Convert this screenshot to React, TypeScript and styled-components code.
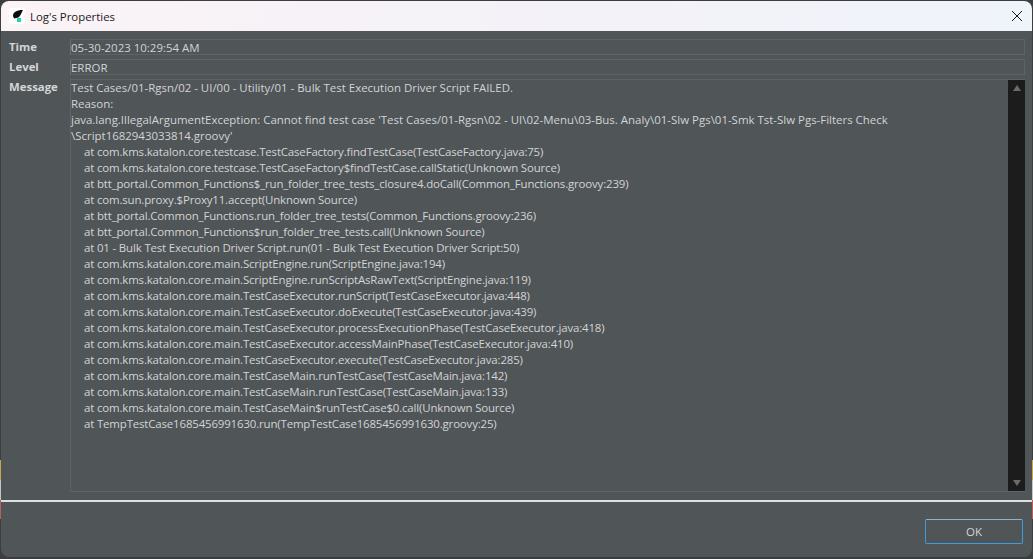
import React from 'react';
import styled, { createGlobalStyle } from 'styled-components';

const GlobalStyle = createGlobalStyle`
  html, body {
    margin: 0;
    padding: 0;
    height: 559px;
    overflow: hidden;
    background: #3b3d3e;
  }
`;

const DialogWindow = styled.div`
  width: 1033px;
  height: 559px;
  box-sizing: border-box;
  padding: 1px 1px 2px 1px;
  display: flex;
  flex-direction: column;
  font-family: 'Open Sans', 'Liberation Sans', sans-serif;
  background: linear-gradient(
    180deg,
    #3b3d3e 0,
    #3b3d3e 460px,
    #c9a94e 460px,
    #c9a94e 480px,
    #c4c6c6 480px,
    #c4c6c6 500px,
    #b8605c 500px,
    #b8605c 519px,
    #3b3d3e 519px
  );
`;

const TitleBar = styled.div`
  height: 30px;
  flex: none;
  display: flex;
  align-items: center;
  padding: 0 7px 0 8px;
  gap: 5px;
  background: linear-gradient(90deg, #fbf3f6 0%, #f4f2f8 50%, #eff3fa 100%);
  border-radius: 8px 8px 0 0;
`;

const AppIcon = styled.svg`
  width: 16px;
  height: 16px;
  flex: none;
`;

const TitleText = styled.span`
  flex: 1;
  font-size: 11.4px;
  color: #1a1a1a;
`;

const CloseButton = styled.button`
  width: 16px;
  height: 16px;
  padding: 0;
  border: none;
  background: none;
  display: flex;
  align-items: center;
  justify-content: center;
`;

const Body = styled.div`
  flex: 1;
  min-height: 0;
  background: #505558;
  border-radius: 0 0 8px 8px;
  display: flex;
  flex-direction: column;
`;

const Fields = styled.div`
  height: 469px;
  flex: none;
  box-sizing: border-box;
  padding: 8px 7px 0 8px;
  display: flex;
  flex-direction: column;
  gap: 4px;
`;

const FieldRow = styled.div<{ $grow?: boolean }>`
  display: flex;
  height: ${({ $grow }) => ($grow ? '413px' : '16px')};
`;

const FieldLabel = styled.div`
  width: 61px;
  flex: none;
  font-size: 11.4px;
  font-weight: 700;
  line-height: 16px;
  color: #d4d6d7;
`;

const FieldValue = styled.div`
  flex: 1;
  box-sizing: border-box;
  height: 16px;
  border: 1px solid #5e6366;
  border-left-color: #6a6f72;
  font-size: 11.46px;
  line-height: 16px;
  color: #d2d4d5;
  white-space: nowrap;
`;

const MessageBox = styled.div`
  flex: 1;
  display: flex;
  box-sizing: border-box;
  border: 1px solid #5e6366;
  min-width: 0;
`;

const MessageText = styled.div`
  flex: 1;
  font-size: 11.46px;
  line-height: 16px;
  color: #d2d4d5;
  white-space: pre;
`;

const MessageLine = styled.div<{ $trace?: boolean }>`
  tab-size: 13px;
  letter-spacing: ${({ $trace }) => ($trace ? '-0.16px' : 'normal')};
`;

const ScrollTrack = styled.div`
  width: 17px;
  flex: none;
  margin-right: -1px;
  background: #1c1c1c;
  display: flex;
  flex-direction: column;
  justify-content: space-between;
  align-items: center;
  padding: 5px 0;
  box-sizing: border-box;
`;

const ScrollArrow = styled.div<{ $down?: boolean }>`
  width: 0;
  height: 0;
  border-left: 4px solid transparent;
  border-right: 4px solid transparent;
  ${({ $down }) =>
    $down ? 'border-top: 6px solid #6b6b6b;' : 'border-bottom: 6px solid #6b6b6b;'}
`;

const Divider = styled.div`
  height: 2px;
  flex: none;
  background: #dfe1e1;
`;

const Footer = styled.div`
  flex: 1;
  display: flex;
  justify-content: flex-end;
  align-items: flex-start;
  padding: 17px 9px 0 0;
`;

const OkButton = styled.button`
  width: 98px;
  height: 25px;
  padding: 0;
  background: #505558;
  border: 1px solid #3f9be0;
  border-top-color: #8fb2cc;
  border-radius: 2px;
  font-family: inherit;
  font-size: 11.46px;
  color: #d2d4d5;
`;

const messageLines = [
  'Test Cases/01-Rgsn/02 - UI/00 - Utility/01 - Bulk Test Execution Driver Script FAILED.',
  'Reason:',
  "java.lang.IllegalArgumentException: Cannot find test case 'Test Cases/01-Rgsn\\02 - UI\\02-Menu\\03-Bus. Analy\\01-Slw Pgs\\01-Smk Tst-Slw Pgs-Filters Check",
  "\\Script1682943033814.groovy'",
  '\tat com.kms.katalon.core.testcase.TestCaseFactory.findTestCase(TestCaseFactory.java:75)',
  '\tat com.kms.katalon.core.testcase.TestCaseFactory$findTestCase.callStatic(Unknown Source)',
  '\tat btt_portal.Common_Functions$_run_folder_tree_tests_closure4.doCall(Common_Functions.groovy:239)',
  '\tat com.sun.proxy.$Proxy11.accept(Unknown Source)',
  '\tat btt_portal.Common_Functions.run_folder_tree_tests(Common_Functions.groovy:236)',
  '\tat btt_portal.Common_Functions$run_folder_tree_tests.call(Unknown Source)',
  '\tat 01 - Bulk Test Execution Driver Script.run(01 - Bulk Test Execution Driver Script:50)',
  '\tat com.kms.katalon.core.main.ScriptEngine.run(ScriptEngine.java:194)',
  '\tat com.kms.katalon.core.main.ScriptEngine.runScriptAsRawText(ScriptEngine.java:119)',
  '\tat com.kms.katalon.core.main.TestCaseExecutor.runScript(TestCaseExecutor.java:448)',
  '\tat com.kms.katalon.core.main.TestCaseExecutor.doExecute(TestCaseExecutor.java:439)',
  '\tat com.kms.katalon.core.main.TestCaseExecutor.processExecutionPhase(TestCaseExecutor.java:418)',
  '\tat com.kms.katalon.core.main.TestCaseExecutor.accessMainPhase(TestCaseExecutor.java:410)',
  '\tat com.kms.katalon.core.main.TestCaseExecutor.execute(TestCaseExecutor.java:285)',
  '\tat com.kms.katalon.core.main.TestCaseMain.runTestCase(TestCaseMain.java:142)',
  '\tat com.kms.katalon.core.main.TestCaseMain.runTestCase(TestCaseMain.java:133)',
  '\tat com.kms.katalon.core.main.TestCaseMain$runTestCase$0.call(Unknown Source)',
  '\tat TempTestCase1685456991630.run(TempTestCase1685456991630.groovy:25)',
];

const App = () => {
  return (
    <>
      <GlobalStyle />
      <DialogWindow>
        <TitleBar>
          <AppIcon viewBox="0 0 16 16">
            <rect width="16" height="16" rx="2" fill="#ffffff" />
            <path d="M4 8 C4 4.5 7 2 14 2 L11.5 7 C10.5 9 9 10 7 10 L5 10.5 Z" fill="#0d0d0d" />
            <rect x="8" y="10" width="4" height="4" fill="#1fd6a0" />
          </AppIcon>
          <TitleText>Log's Properties</TitleText>
          <CloseButton aria-label="Close">
            <svg width="10" height="10" viewBox="0 0 10 10">
              <path d="M0 0 L10 10 M10 0 L0 10" stroke="#1a1a1a" strokeWidth="1" />
            </svg>
          </CloseButton>
        </TitleBar>
        <Body>
          <Fields>
            <FieldRow>
              <FieldLabel>Time</FieldLabel>
              <FieldValue>05-30-2023 10:29:54 AM</FieldValue>
            </FieldRow>
            <FieldRow>
              <FieldLabel>Level</FieldLabel>
              <FieldValue>ERROR</FieldValue>
            </FieldRow>
            <FieldRow $grow>
              <FieldLabel>Message</FieldLabel>
              <MessageBox>
                <MessageText>
                  {messageLines.map((line, index) => (
                    <MessageLine key={index} $trace={line.startsWith('\t')}>
                      {line}
                    </MessageLine>
                  ))}
                </MessageText>
                <ScrollTrack>
                  <ScrollArrow />
                  <ScrollArrow $down />
                </ScrollTrack>
              </MessageBox>
            </FieldRow>
          </Fields>
          <Divider />
          <Footer>
            <OkButton>OK</OkButton>
          </Footer>
        </Body>
      </DialogWindow>
    </>
  );
};

export default App;
